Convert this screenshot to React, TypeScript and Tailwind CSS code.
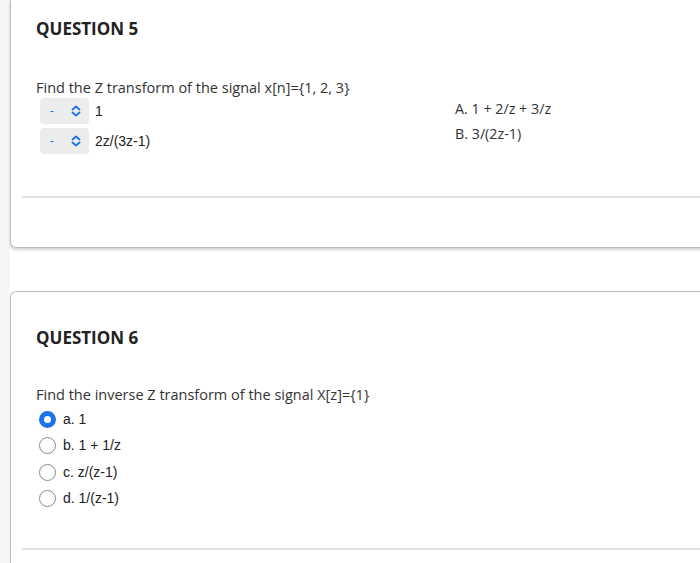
import React from "react";

const sans = { fontFamily: '"Open Sans", "Liberation Sans", sans-serif' };
const rob = { fontFamily: '"Liberation Sans", Arial, sans-serif' };

function UpDown() {
  return (
    <svg width="10" height="12" viewBox="0 0 10 12" fill="none" stroke="#1a73e8" strokeWidth="1.8" strokeLinecap="round" strokeLinejoin="round">
      <path d="M1.5 4.5 L5 1.5 L8.5 4.5" />
      <path d="M1.5 7.5 L5 10.5 L8.5 7.5" />
    </svg>
  );
}

function Sel({ text }: { text: string }) {
  return (
    <div className="flex items-center gap-[6px]">
      <div className="w-[49px] h-[26px] rounded-[4px] bg-[#ececec] flex items-center pl-[10px] gap-[17px]">
        <span className="text-[#1a73e8] text-[12px] leading-none" style={rob}>-</span>
        <UpDown />
      </div>
      <span className="text-[14px] text-[#222]" style={rob}>{text}</span>
    </div>
  );
}

function Radio({ label, checked }: { label: string; checked?: boolean }) {
  return (
    <div className="flex items-center h-[26.5px] gap-[7px]">
      {checked ? (
        <div className="w-[17px] h-[17px] rounded-full border-[5px] border-[#1a73e8] bg-white" />
      ) : (
        <div className="w-[17px] h-[17px] rounded-full border-[1.5px] border-[#8a8a8a] bg-white" />
      )}
      <span className="text-[14px] text-[#222]" style={rob}>{label}</span>
    </div>
  );
}

export default function App() {
  return (
    <div className="w-[700px] h-[563px] overflow-hidden bg-white flex">
      <div className="w-[10px] shrink-0 bg-[#f6f6f6]" />
      <div className="flex-1 flex flex-col min-w-0">
        <div className="h-[248px] shrink-0 border-l border-b border-[#bdbdbd] rounded-bl-[6px] shadow-[0_2px_3px_rgba(0,0,0,0.18)] w-[720px] flex flex-col">
          <div className="pl-[25px] pt-[17px] text-[17px] leading-[24px] font-bold text-[#222]" style={sans}>QUESTION 5</div>
          <div className="flex mt-[36px]">
            <div className="pl-[25px] w-[444px] shrink-0">
              <div className="text-[14.5px] leading-[22px] text-[#333]" style={sans}>Find the Z transform of the signal x[n]={"{"}1, 2, 3{"}"}</div>
              <div className="pl-[4px] flex flex-col gap-[4px] mt-[-1px]">
                <Sel text="1" />
                <Sel text="2z/(3z-1)" />
              </div>
            </div>
            <div className="flex flex-col pt-[21px] gap-[3px] text-[14.3px] leading-[22px] text-[#333]" style={sans}>
              <div>A. 1 + 2/z + 3/z</div>
              <div>B. 3/(2z-1)</div>
            </div>
          </div>
          <div className="ml-[11px] mt-[42px] border-t-[2px] border-[#e0e0e0]" />
        </div>
        <div className="mt-[43px] flex-1 border-l border-t border-[#bdbdbd] rounded-tl-[6px] w-[720px] flex flex-col">
          <div className="pl-[25px] pt-[34px] text-[17px] leading-[24px] font-bold text-[#222]" style={sans}>QUESTION 6</div>
          <div className="pl-[25px] mt-[34px] text-[14.5px] leading-[22px] text-[#333]" style={sans}>Find the inverse Z transform of the signal X[z]={"{"}1{"}"}</div>
          <div className="pl-[28px] flex flex-col">
            <Radio label="a. 1" checked />
            <Radio label="b. 1 + 1/z" />
            <Radio label="c. z/(z-1)" />
            <Radio label="d. 1/(z-1)" />
          </div>
          <div className="ml-[11px] mt-[36px] border-t-[2px] border-[#e0e0e0]" />
        </div>
      </div>
    </div>
  );
}
